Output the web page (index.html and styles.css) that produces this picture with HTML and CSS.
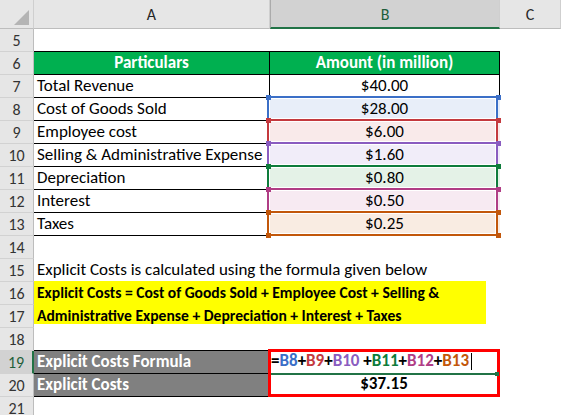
FILE: index.html
```html
<!DOCTYPE html>
<html>
<head>
<meta charset="utf-8">
<link rel="stylesheet" href="styles.css">
</head>
<body>
<div class="sheet">
  <div class="corner"><span class="tri"></span></div><div class="ch">A</div><div class="ch sel">B</div><div class="ch">C</div>

  <div class="rh">5</div><div class="c tb"></div><div class="c tb"></div><div class="c"></div>
  <div class="rh">6</div><div class="c t th">Particulars</div><div class="c t th">Amount (in million)</div><div class="c"></div>
  <div class="rh">7</div><div class="c t">Total Revenue</div><div class="c t num">$40.00</div><div class="c"></div>
  <div class="rh">8</div><div class="c t">Cost of Goods Sold</div><div class="c t num ref blue">$28.00</div><div class="c"></div>
  <div class="rh">9</div><div class="c t">Employee cost</div><div class="c t num ref red">$6.00</div><div class="c"></div>
  <div class="rh">10</div><div class="c t">Selling &amp; Administrative Expense</div><div class="c t num ref purple">$1.60</div><div class="c"></div>
  <div class="rh">11</div><div class="c t">Depreciation</div><div class="c t num ref green">$0.80</div><div class="c"></div>
  <div class="rh">12</div><div class="c t">Interest</div><div class="c t num ref magenta">$0.50</div><div class="c"></div>
  <div class="rh">13</div><div class="c t">Taxes</div><div class="c t num ref orange">$0.25</div><div class="c"></div>
  <div class="rh">14</div><div class="c"></div><div class="c"></div><div class="c"></div>
  <div class="rh">15</div><div class="c">Explicit Costs is calculated using the formula given below</div><div class="c"></div><div class="c"></div>
  <div class="rh">16</div>
  <div class="note"><div class="yellow"><div class="ytext">Explicit Costs = Cost of Goods Sold + Employee Cost + Selling &amp;<br>Administrative Expense + Depreciation + Interest + Taxes</div></div></div>
  <div class="c"></div>
  <div class="rh">17</div><div class="c"></div>
  <div class="rh">18</div><div class="c tb"></div><div class="c"></div><div class="c"></div>
  <div class="rh sel">19</div><div class="c t grey">Explicit Costs Formula</div>
  <div class="rng">
    <div class="formula"><span class="k">=</span><span class="f-blue">B8</span><span class="k">+</span><span class="f-red">B9</span><span class="k">+</span><span class="f-purple">B10</span> <span class="k">+</span><span class="f-green">B11</span><span class="k">+</span><span class="f-magenta">B12</span><span class="k">+</span><span class="f-orange">B13</span><span class="cursor"></span></div>
    <div class="active"></div>
    <div class="result">$37.15</div>
  </div>
  <div class="c"></div>
  <div class="rh">20</div><div class="c t grey">Explicit Costs</div><div class="c"></div>
  <div class="rh">21</div><div class="c"></div><div class="c"></div><div class="c"></div>
</div>
</body>
</html>
```

FILE: styles.css
```css
html, body {
  margin: 0;
  padding: 0;
  background: #fff;
}
body {
  width: 561px;
  height: 415px;
  overflow: hidden;
  font-family: Carlito, Lato, "Liberation Sans", sans-serif;
  font-size: 17px;
  color: #000;
}
.sheet {
  display: grid;
  grid-template-columns: 34px 236px 230px 61px;
  grid-template-rows: 29px;
  grid-auto-rows: 23px;
}
.corner {
  background: #e6e6e6;
  border-right: 1px solid #cfcfcf;
  border-bottom: 1px solid #bdbdbd;
  box-sizing: border-box;
  position: relative;
}
.tri {
  position: absolute;
  right: 4px;
  bottom: 3px;
  width: 0;
  height: 0;
  border-left: 15px solid transparent;
  border-bottom: 15px solid #b4b4b4;
}
.ch {
  box-sizing: border-box;
  background: #e6e6e6;
  border-right: 1px solid #cfcfcf;
  border-bottom: 1px solid #bdbdbd;
  text-align: center;
  line-height: 30px;
  color: #262626;
  font-size: 16px;
}
.ch.sel {
  background: #d2d2d2;
  border-bottom: 2px solid #217346;
  border-left: 1px solid #ababab;
  color: #1e5e3a;
}
.rh {
  box-sizing: border-box;
  background: #e6e6e6;
  border-right: 1px solid #bdbdbd;
  border-bottom: 1px solid #d2d2d2;
  text-align: center;
  line-height: 23px;
  color: #333;
  font-size: 16px;
}
.rh.sel {
  background: #d2d2d2;
  border-right: 2px solid #217346;
  color: #1e5e3a;
}
.c {
  box-sizing: border-box;
  white-space: nowrap;
  line-height: 22px;
  padding: 0 3px;
}
.tb {
  border-bottom: 1px solid #000;
}
.t {
  border-right: 1px solid #000;
  border-bottom: 1px solid #000;
}
.th {
  background: #00b050;
  color: #fff;
  font-weight: bold;
  font-size: 17px;
  text-align: center;
}
.num {
  text-align: center;
}
.grey {
  background: #808080;
  color: #fff;
  font-weight: bold;
}
.ref {
  position: relative;
  background: var(--hf);
  border-right-color: transparent;
  border-bottom-color: transparent;
}
.ref::before {
  content: "";
  position: absolute;
  left: -3px;
  top: -2px;
  right: 1px;
  bottom: -1px;
  border: 2px solid var(--hc);
  box-shadow: inset 0 0 0 1px #fff;
}
.ref::after {
  content: "";
  position: absolute;
  left: -4px;
  top: -3px;
  width: 5px;
  height: 5px;
  background: var(--hc);
  box-shadow: 230px 0 0 var(--hc), 0 23px 0 var(--hc), 230px 23px 0 var(--hc);
}
.blue { --hc: #3b6fc7; --hf: #e8eef9; }
.red { --hc: #c4393e; --hf: #f9eaea; }
.purple { --hc: #8a5cc0; --hf: #f1edf9; }
.green { --hc: #0e7c3b; --hf: #e4f2e7; }
.magenta { --hc: #b03d85; --hf: #f7eaf2; }
.orange { --hc: #c2570a; --hf: #f9ece2; }

.note {
  grid-column: span 2;
  grid-row: span 2;
}
.yellow {
  margin-top: 3px;
  width: 452px;
  height: 43px;
  background: #ffff00;
  font-weight: bold;
  font-size: 15.6px;
}
.ytext {
  padding-left: 3px;
  line-height: 23px;
  margin-top: -4px;
  white-space: nowrap;
}
.rng {
  grid-row: span 2;
  margin: -2px 0 0 -2px;
  border: 3px solid #ff0000;
  display: flex;
  flex-direction: column;
  position: relative;
  font-weight: bold;
}
.formula {
  height: 21px;
  line-height: 18px;
  white-space: nowrap;
  padding-left: 0;
}
.k { color: #000; }
.f-blue { color: #3b6fc7; }
.f-red { color: #c4393e; }
.f-purple { color: #8a5cc0; }
.f-green { color: #0e7c3b; }
.f-magenta { color: #b03d85; }
.f-orange { color: #c2570a; }
.cursor {
  display: inline-block;
  width: 1px;
  height: 17px;
  background: #000;
  margin-left: 2px;
  vertical-align: -4px;
}
.active {
  height: 2px;
  background: #217346;
  margin-right: 1px;
  position: relative;
}
.active::after {
  content: "";
  position: absolute;
  right: -3px;
  top: -1px;
  width: 4px;
  height: 4px;
  background: #217346;
}
.result {
  flex: 1;
  text-align: center;
  line-height: 18px;
}
```
